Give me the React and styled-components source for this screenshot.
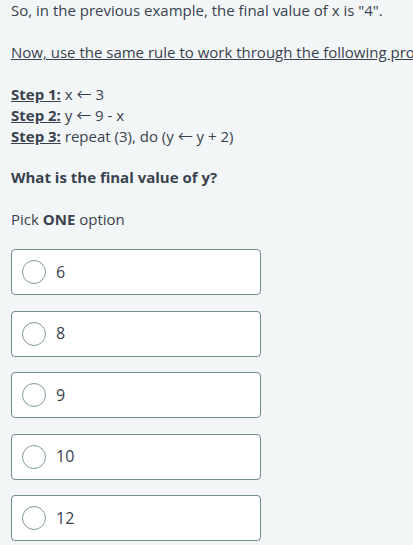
import React from "react";
import styled, { createGlobalStyle } from "styled-components";

const Global = createGlobalStyle`
  html, body { margin: 0; padding: 0; background: #f3f6f7; }
  body { font-family: "Open Sans", "Liberation Sans", sans-serif; color: #39424e; overflow: hidden; }
`;

const Page = styled.div`
  padding: 0 0 0 11px;
  font-size: 15px;
  line-height: 21px;
  white-space: nowrap;
`;

const Para = styled.p`
  margin: 0 0 ${(p) => p.$after || 21}px 0;
  text-decoration: ${(p) => (p.$underline ? "underline" : "none")};
`;

const Line = styled.div`
  height: 21px;
`;

const StepLabel = styled.b`
  font-weight: 700;
  text-decoration: underline;
`;

const Arrow = styled.span`
  font-family: "Noto Sans CJK SC", sans-serif;
  font-size: 15px;
  line-height: 0;
`;

const Question = styled.p`
  margin: 0 0 21px 0;
  font-size: 15px;
  font-weight: 700;
`;

const Options = styled.div`
  display: flex;
  flex-direction: column;
  gap: 15.6px;
`;

const Option = styled.label`
  box-sizing: border-box;
  display: flex;
  align-items: center;
  gap: 10px;
  width: 250px;
  height: 46px;
  padding-left: 10px;
  background: #fff;
  border: 1px solid #718b8f;
  border-radius: 4px;
  font-size: 16px;
`;

const Radio = styled.span`
  box-sizing: border-box;
  width: 24px;
  height: 24px;
  border-radius: 50%;
  border: 1px solid #7f9a9c;
  background: #fff;
  flex: none;
`;

const options = ["6", "8", "9", "10", "12"];

export default function App() {
  return (
    <Page>
      <Global />
      <Para>So, in the previous example, the final value of x is "4".</Para>
      <Para $underline>Now, use the same rule to work through the following problem:</Para>
      <Para as="div" $after={19.5}>
        <Line>
          <StepLabel>Step 1:</StepLabel> x <Arrow>←</Arrow> 3
        </Line>
        <Line>
          <StepLabel>Step 2:</StepLabel> y <Arrow>←</Arrow> 9 - x
        </Line>
        <Line>
          <StepLabel>Step 3:</StepLabel> repeat (3), do (y <Arrow>←</Arrow> y + 2)
        </Line>
      </Para>
      <Question>What is the final value of y?</Question>
      <Para $after={19.5}>
        Pick <b>ONE</b> option
      </Para>
      <Options>
        {options.map((o) => (
          <Option key={o}>
            <Radio />
            {o}
          </Option>
        ))}
      </Options>
    </Page>
  );
}
